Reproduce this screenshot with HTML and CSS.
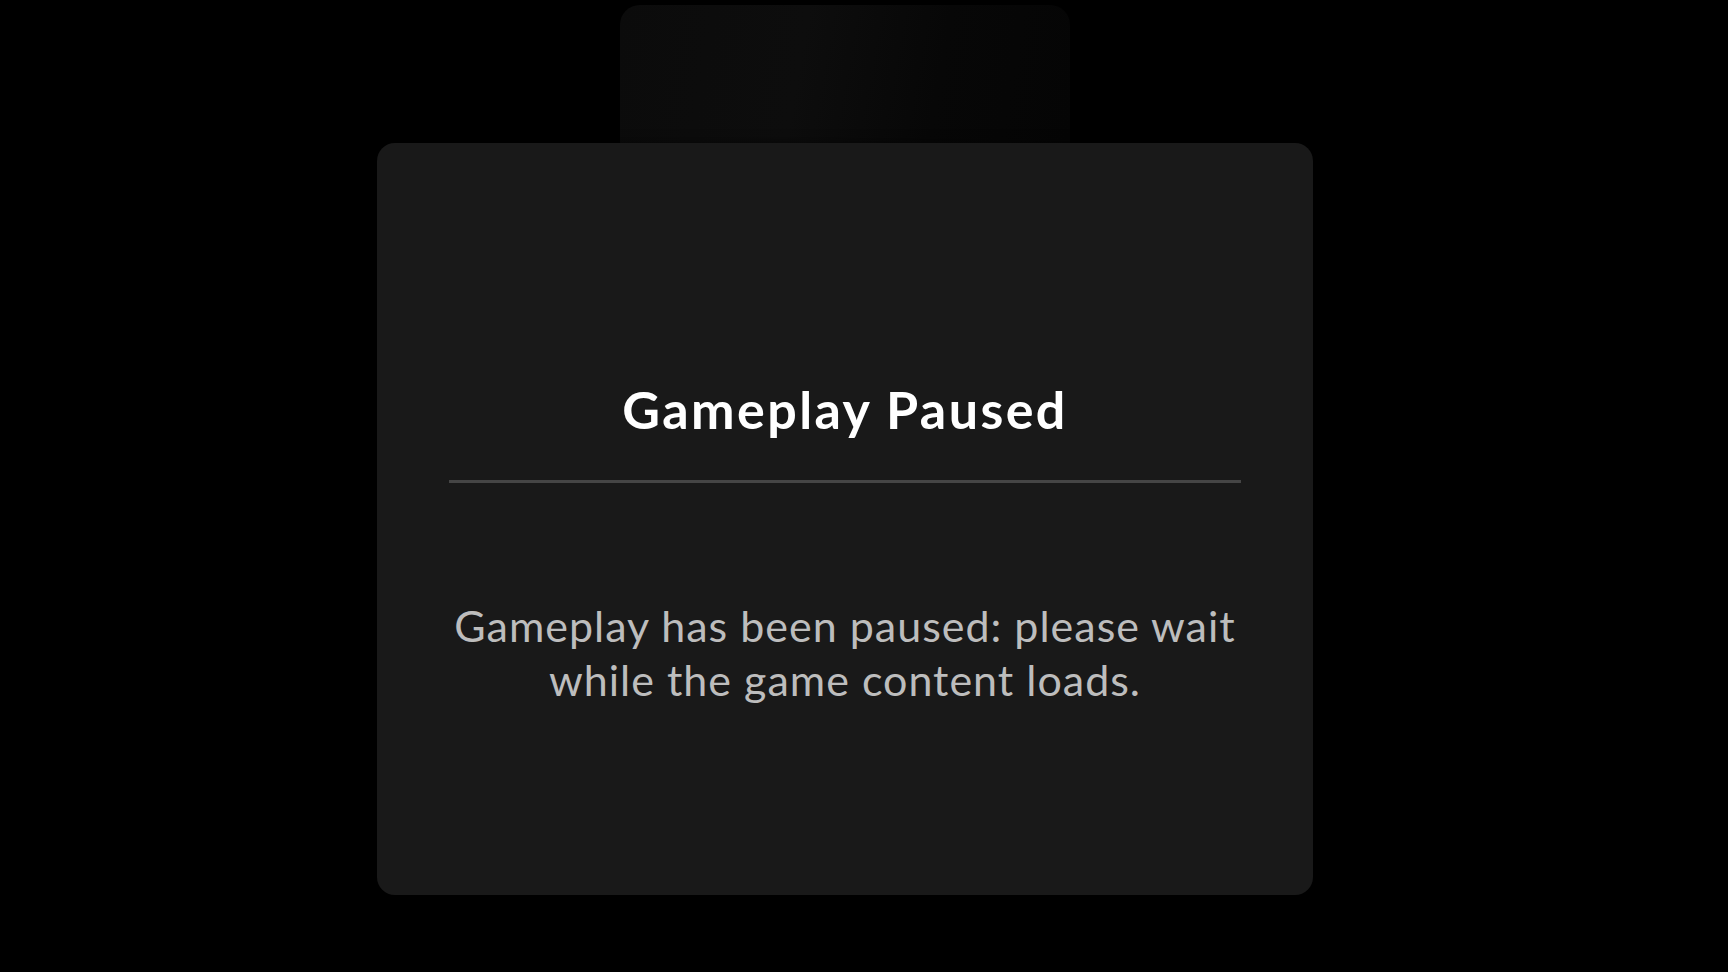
FILE: index.html
```html
<!DOCTYPE html>
<html lang="en">
<head>
    <meta charset="UTF-8">
    <meta name="viewport" content="width=device-width, initial-scale=1.0">
    <title>Gameplay Paused</title>
    <link rel="stylesheet" href="styles.css">
</head>
<body>
    <div class="stage">
        <div class="back-card"></div>
        <div class="modal">
            <h1 class="modal-title">Gameplay Paused</h1>
            <hr class="divider">
            <p class="modal-text">Gameplay has been paused: please wait while the game content loads.</p>
        </div>
    </div>
</body>
</html>
```

FILE: styles.css
```css
:root {
    --bg: #000;
    --modal-bg: #191919;
    --divider: #454545;
    --title: #fff;
    --text: #bdbdbd;
}
html, body {
    height: 100%;
}
body {
    margin: 0;
    background-color: var(--bg);
    font-family: Lato, 'Noto Sans', sans-serif;
    overflow: hidden;
}
.stage {
    width: 936px;
    margin-left: 377px;
    padding-top: 5px;
}
.back-card {
    width: 450px;
    height: 138px;
    margin-left: 243px;
    border-radius: 20px 20px 0 0;
    background: linear-gradient(100deg, #0b0b0b 0%, #0d0d0d 40%, #070707 70%, #050505 100%);
}
.modal {
    height: 752px;
    box-sizing: border-box;
    padding: 235px 72px 0;
    background-color: var(--modal-bg);
    border-radius: 18px;
    box-shadow: 0 0 12px rgba(0, 0, 0, 0.6);
    text-align: center;
}
.modal-title {
    margin: 0;
    color: var(--title);
    font-size: 52px;
    font-weight: 700;
    line-height: 62px;
    letter-spacing: 2.4px;
}
.divider {
    margin: 40px 0 0;
    border: none;
    height: 3px;
    background-color: var(--divider);
}
.modal-text {
    margin: 116px -10px 0;
    color: var(--text);
    font-size: 43px;
    font-weight: 400;
    line-height: 54px;
    letter-spacing: 1px;
}
```
